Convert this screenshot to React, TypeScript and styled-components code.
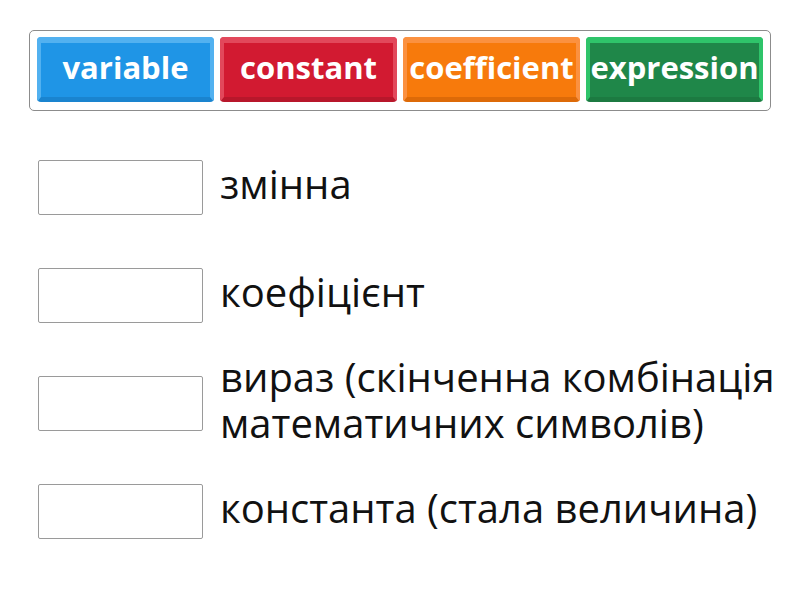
import React from 'react';
import styled, { createGlobalStyle } from 'styled-components';

const GlobalStyle = createGlobalStyle`
	body {
		margin: 0;
		background: #fff;
		font-family: 'Open Sans', 'Noto Sans', sans-serif;
	}
`;

const Page = styled.div`
	width: 800px;
	height: 600px;
	padding: 30px 0 0 29px;
	box-sizing: border-box;
`;

const Tray = styled.div`
	width: 742px;
	height: 81px;
	box-sizing: border-box;
	border: 1px solid #8c8c8c;
	border-radius: 5px;
	padding: 6px 7px;
	display: flex;
	gap: 6px;
`;

const tileColors = {
	blue: { main: '#1f95e6', light: '#52b1f0', dark: '#1a84cf' },
	red: { main: '#d21a31', light: '#e2485b', dark: '#b8172b' },
	orange: { main: '#f77a0c', light: '#fb9140', dark: '#dd6a08' },
	green: { main: '#1f8749', light: '#2fc46a', dark: '#1c7a41' },
};

type TileColor = keyof typeof tileColors;

const Tile = styled.div<{ $color: TileColor }>`
	width: 177px;
	height: 65px;
	box-sizing: border-box;
	border-radius: 4px;
	border-style: solid;
	border-width: 6px 4px 5px 4px;
	border-color: ${(p) => tileColors[p.$color].light};
	border-bottom-color: ${(p) => tileColors[p.$color].dark};
	background: ${(p) => tileColors[p.$color].main};
	display: flex;
	align-items: center;
	justify-content: center;
	color: #fff;
	font-weight: 700;
	font-size: 31px;
	line-height: 40px;
	padding-bottom: 6px;
	white-space: nowrap;
	overflow: hidden;
`;

const List = styled.div`
	margin-top: 22px;
	display: flex;
	flex-direction: column;
`;

const Row = styled.div`
	height: 108px;
	display: flex;
	align-items: center;
	gap: 17px;
	padding-left: 9px;
`;

const DropBox = styled.div`
	width: 165px;
	height: 55px;
	flex-shrink: 0;
	box-sizing: border-box;
	border: 1px solid #9a9a9a;
	border-radius: 2px;
	background: #fff;
`;

const Label = styled.div`
	font-size: 40px;
	line-height: 46px;
	color: #111;
	padding-bottom: 6px;
	white-space: nowrap;
`;

const tiles: { text: string; color: TileColor }[] = [
	{ text: 'variable', color: 'blue' },
	{ text: 'constant', color: 'red' },
	{ text: 'coefficient', color: 'orange' },
	{ text: 'expression', color: 'green' },
];

const rows = [
	['змінна'],
	['коефіцієнт'],
	['вираз (скінченна комбінація', 'математичних символів)'],
	['константа (стала величина)'],
];

const App = () => {
	return (
		<>
			<GlobalStyle />
			<Page>
				<Tray>
					{tiles.map((t) => (
						<Tile key={t.text} $color={t.color}>
							{t.text}
						</Tile>
					))}
				</Tray>
				<List>
					{rows.map((lines) => (
						<Row key={lines[0]}>
							<DropBox />
							<Label>
								{lines.map((l) => (
									<div key={l}>{l}</div>
								))}
							</Label>
						</Row>
					))}
				</List>
			</Page>
		</>
	);
};

export default App;
